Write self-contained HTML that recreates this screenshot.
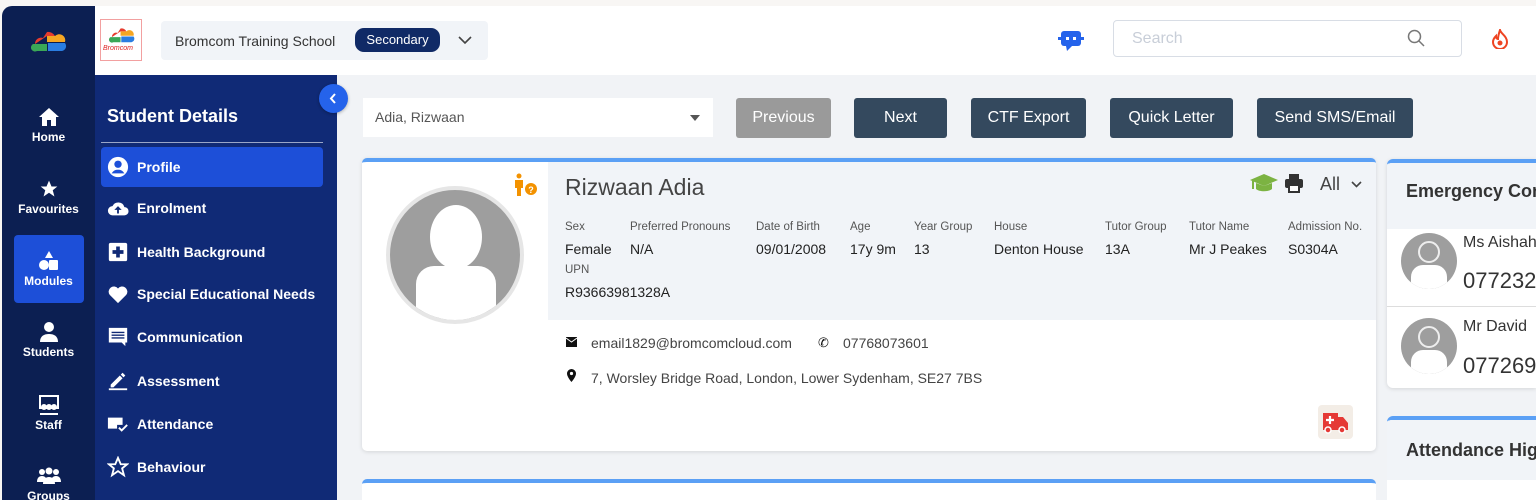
<!DOCTYPE html>
<html><head><meta charset="utf-8"><style>
*{margin:0;padding:0;box-sizing:border-box}
html,body{width:1536px;height:500px;overflow:hidden}
body{background:#f8f6f4;font-family:"Liberation Sans",sans-serif;position:relative}
.abs{position:absolute}
.rail{left:2px;top:6px;width:93px;height:494px;background:#0c1f52;border-top-left-radius:10px}
.rail .it{position:absolute;left:0;width:93px;text-align:center;color:#fff;font-size:12px;font-weight:bold}
.hdr{left:95px;top:6px;width:1441px;height:69px;background:#fff}
.side{left:95px;top:75px;width:242px;height:425px;background:#102a76}
.main{left:337px;top:75px;width:1199px;height:425px;background:#f1f3f6;overflow:hidden}
.mi{position:absolute;left:6px;width:222px;height:40px;color:#fff;font-size:14px;font-weight:bold;display:flex;align-items:center;padding-left:6px}
.mi svg{width:22px;height:22px;margin-right:8px;fill:#fff}
.btn{position:absolute;top:98px;height:40px;background:#34495e;color:#fff;font-size:16px;border-radius:3px;display:flex;align-items:center;justify-content:center}
.lab{position:absolute;top:221px;font-size:11.5px;color:#555}
.val{position:absolute;top:241px;font-size:14px;color:#222}
</style></head><body>
<div class="abs rail">
 <svg class="abs" style="left:29px;top:24px" width="36" height="22" viewBox="0 0 36 22"><path d="M4 14a6 6 0 0 1 8-6l4-6a8 8 0 0 1 8 4h-8z" fill="#e63c2e"/><path d="M16 6h8a6 6 0 0 1 10 6H16z" fill="#f5a623"/><path d="M2 14h14v7H6a4 4 0 0 1-4-7z" fill="#3aa757"/><path d="M17 13h17a5 5 0 0 1-3 8H17z" fill="#2a7de1"/></svg>
 <div class="it" style="top:101px"><svg width="22" height="20" viewBox="0 0 22 20" fill="#fff"><path d="M11 1L1 10h3v9h5v-6h4v6h5v-9h3z"/></svg><br>Home</div>
 <div class="it" style="top:173px"><svg width="22" height="20" viewBox="0 0 24 24" fill="#fff"><path d="M12 2l3 7h7l-5.5 4.5 2 7.5-6.5-4.5-6.5 4.5 2-7.5L2 9h7z"/></svg><br>Favourites</div>
 <div class="abs" style="left:12px;top:229px;width:70px;height:68px;background:#1d4fd8;border-radius:4px"></div>
 <div class="it" style="top:245px"><svg width="22" height="20" viewBox="0 0 22 20" fill="#fff"><path d="M11 0l4 7H7z"/><circle cx="6" cy="14" r="5"/><rect x="11" y="9" width="9" height="10" rx="1"/></svg><br>Modules</div>
 <div class="it" style="top:316px"><svg width="22" height="20" viewBox="0 0 22 20" fill="#fff"><circle cx="11" cy="5" r="5"/><path d="M2 20c0-6 4-8 9-8s9 2 9 8z"/></svg><br>Students</div>
 <div class="it" style="top:389px"><svg width="22" height="20" viewBox="0 0 22 20" fill="none" stroke="#fff" stroke-width="2"><rect x="2" y="1" width="18" height="12"/><circle cx="6" cy="12" r="2" fill="#fff"/><circle cx="11" cy="12" r="2" fill="#fff"/><circle cx="16" cy="12" r="2" fill="#fff"/><path d="M2 19h18"/></svg><br>Staff</div>
 <div class="it" style="top:460px"><svg width="24" height="20" viewBox="0 0 24 20" fill="#fff"><circle cx="5" cy="6" r="3"/><circle cx="12" cy="5" r="3.5"/><circle cx="19" cy="6" r="3"/><path d="M0 16c0-4 2-6 5-6s5 2 5 6zM14 16c0-4 2-6 5-6s5 2 5 6zM6 18c0-5 3-7 6-7s6 2 6 7z"/></svg><br>Groups</div>
</div>
<div class="abs hdr">
 <div class="abs" style="left:5px;top:13px;width:42px;height:42px;border:1px solid #f2a0a0;background:#fff"><svg class="abs" style="left:8px;top:7px" width="26" height="16" viewBox="0 0 36 22"><path d="M4 14a6 6 0 0 1 8-6l4-6a8 8 0 0 1 8 4h-8z" fill="#e63c2e"/><path d="M16 6h8a6 6 0 0 1 10 6H16z" fill="#f5a623"/><path d="M2 14h14v7H6a4 4 0 0 1-4-7z" fill="#3aa757"/><path d="M17 13h17a5 5 0 0 1-3 8H17z" fill="#2a7de1"/></svg><div class="abs" style="top:25px;left:2px;font-size:7px;color:#d22;font-style:italic">Bromcom</div></div>
 <div class="abs" style="left:66px;top:15px;width:327px;height:39px;background:#f1f4f8;border-radius:4px"></div>
 <div class="abs" style="left:80px;top:27px;font-size:14px;color:#333">Bromcom Training School</div>
 <div class="abs" style="left:260px;top:22px;width:85px;height:24px;background:#102a66;border-radius:9px;color:#fff;font-size:13px;text-align:center;line-height:24px">Secondary</div>
 <svg class="abs" style="left:363px;top:30px" width="14" height="9" viewBox="0 0 14 9"><path d="M1 1l6 6 6-6" stroke="#444" stroke-width="1.6" fill="none"/></svg>
 <svg class="abs" style="left:962px;top:22px" width="28" height="26" viewBox="0 0 28 26"><rect x="4" y="3" width="20" height="15" rx="3" fill="#2563eb"/><path d="M9 18h6l-5 5z" fill="#2563eb"/><rect x="1" y="9" width="3" height="3" fill="#2563eb"/><rect x="24" y="9" width="3" height="3" fill="#2563eb"/><rect x="9" y="9" width="3" height="3" fill="#fff"/><rect x="16" y="9" width="3" height="3" fill="#fff"/></svg>
 <div class="abs" style="left:1018px;top:14px;width:349px;height:37px;border:1px solid #d8dde5;border-radius:4px"></div>
 <div class="abs" style="left:1037px;top:24px;font-size:16px;color:#c8ced8">Search</div>
 <svg class="abs" style="left:1312px;top:23px" width="18" height="18" viewBox="0 0 18 18"><circle cx="7.5" cy="7.5" r="6" stroke="#777" stroke-width="1.5" fill="none"/><path d="M12 12l5 5" stroke="#777" stroke-width="1.5"/></svg>
 <svg class="abs" style="left:1397px;top:23px" width="16" height="20" viewBox="0 0 16 20"><path d="M8 1c1 4 7 6 7 12a7 7 0 0 1-14 0c0-3 2-5 3-6 0 2 1 3 2 3 0-3 1-6 2-9z" fill="none" stroke="#e42" stroke-width="2"/><circle cx="8" cy="14" r="2.5" fill="#e42"/></svg>
</div>
<div class="abs side">
 <div class="abs" style="left:12px;top:31px;color:#fff;font-size:18px;font-weight:bold">Student Details</div>
 <div class="abs" style="left:6px;top:67px;width:222px;height:1px;background:#9aa6c8"></div>
 <div class="mi" style="top:72px;background:#1d4fd8;border-radius:4px;height:40px"><svg viewBox="0 0 24 24"><circle cx="12" cy="12" r="11"/><circle cx="12" cy="9" r="4" fill="#1d4fd8"/><path d="M5 19c2-3 4-4 7-4s5 1 7 4" fill="#1d4fd8"/></svg>Profile</div>
 <div class="mi" style="top:113px"><svg viewBox="0 0 24 24"><path d="M6 20a5 5 0 0 1 0-10 7 7 0 0 1 13 1 4.5 4.5 0 0 1 0 9z"/><path d="M12 10l-4 4h3v4h2v-4h3z" fill="#102a76"/></svg>Enrolment</div>
 <div class="mi" style="top:157px"><svg viewBox="0 0 24 24"><rect x="2" y="2" width="20" height="20" rx="2"/><path d="M10 6h4v4h4v4h-4v4h-4v-4H6v-4h4z" fill="#102a76"/></svg>Health Background</div>
 <div class="mi" style="top:199px"><svg viewBox="0 0 24 24"><path d="M12 22L3 13a5.5 5.5 0 0 1 9-7 5.5 5.5 0 0 1 9 7z"/></svg>Special Educational Needs</div>
 <div class="mi" style="top:242px"><svg viewBox="0 0 24 24"><path d="M2 2h20v16h-2v4l-4-4H2z"/><path d="M5 7h14M5 10h14M5 13h14" stroke="#102a76" stroke-width="1.5"/></svg>Communication</div>
 <div class="mi" style="top:286px"><svg viewBox="0 0 24 24"><path d="M4 16l10-10 3 3-10 10H4zM15 5l2-2 3 3-2 2z"/><rect x="2" y="20" width="20" height="2"/></svg>Assessment</div>
 <div class="mi" style="top:329px"><svg viewBox="0 0 24 24"><path d="M2 6h14v2H2zM2 10h14v2H2zM2 14h8v2H2zM13 16l3 3 6-6" stroke="#fff" stroke-width="2" fill="none"/></svg>Attendance</div>
 <div class="mi" style="top:372px"><svg viewBox="0 0 24 24"><path d="M12 2l3 7h7l-5.5 4.5 2 7.5-6.5-4.5-6.5 4.5 2-7.5L2 9h7z" fill="none" stroke="#fff" stroke-width="2"/></svg>Behaviour</div>
</div>
<div class="abs main">
 <div class="abs" style="left:25px;top:404px;width:1014px;height:40px;background:#fff;border-top:4px solid #5ba0f5;border-radius:5px"></div>
 <div class="abs" style="left:1050px;top:341px;width:160px;height:100px;background:#fff;border-top:4px solid #5ba0f5;border-radius:6px;overflow:hidden">
  <div class="abs" style="left:0;top:0;width:160px;height:60px;background:#f1f4f8"></div>
  <div class="abs" style="left:19px;top:20px;font-size:18px;color:#333;font-weight:bold;white-space:nowrap">Attendance Highlights</div>
 </div>
</div>
<div class="abs" style="left:319px;top:84px;width:29px;height:29px;border-radius:50%;background:#2563eb;box-shadow:0 1px 3px rgba(0,0,0,.3)"><svg class="abs" style="left:10px;top:9px" width="8" height="11" viewBox="0 0 8 11"><path d="M6 1L2 5.5 6 10" stroke="#fff" stroke-width="2" fill="none"/></svg></div>
<div class="abs" style="left:363px;top:98px;width:350px;height:39px;background:#fff"></div>
<div class="abs" style="left:375px;top:109px;font-size:14px;color:#555">Adia, Rizwaan</div>
<svg class="abs" style="left:690px;top:115px" width="10" height="6"><path d="M0 0h10L5 6z" fill="#555"/></svg>
<div class="btn" style="left:736px;width:95px;background:#9a9a9a">Previous</div>
<div class="btn" style="left:854px;width:93px">Next</div>
<div class="btn" style="left:971px;width:115px">CTF Export</div>
<div class="btn" style="left:1110px;width:123px">Quick Letter</div>
<div class="btn" style="left:1257px;width:156px">Send SMS/Email</div>
<div class="abs" style="left:362px;top:158px;width:1014px;height:293px;background:#fff;border-top:4px solid #5ba0f5;border-radius:5px;box-shadow:0 1px 4px rgba(0,0,0,.12);overflow:hidden"><div class="abs" style="left:186px;top:0;width:828px;height:158px;background:#f1f4f8"></div></div>
<div class="abs" style="left:386px;top:186px;width:138px;height:138px;border-radius:50%;background:#9e9e9e;border:4px solid #e6e6e6;overflow:hidden"><div class="abs" style="left:40px;top:15px;width:52px;height:64px;border-radius:50%;background:#fff"></div><div class="abs" style="left:26px;top:76px;width:80px;height:60px;border-radius:18px 18px 0 0;background:#fff"></div></div>
<svg class="abs" style="left:513px;top:173px" width="26" height="24" viewBox="0 0 26 24"><circle cx="6" cy="3" r="2.5" fill="#f39200"/><path d="M2 7h8v8H8v8H4v-8H2z" fill="#f39200"/><circle cx="18" cy="16" r="6" fill="#f39200"/><text x="18" y="20" font-size="9" fill="#fff" text-anchor="middle" font-family="Liberation Sans" font-weight="bold">?</text></svg>
<div class="abs" style="left:565px;top:174px;font-size:23px;color:#444">Rizwaan Adia</div>
<svg class="abs" style="left:1249px;top:172px" width="30" height="22" viewBox="0 0 30 22"><path d="M15 2L1 8l14 6 14-6z" fill="#7cb342"/><path d="M7 11v6c3 3 13 3 16 0v-6l-8 3z" fill="#7cb342"/><path d="M4 9v8" stroke="#7cb342" stroke-width="2"/></svg>
<svg class="abs" style="left:1284px;top:173px" width="20" height="20" viewBox="0 0 20 20"><rect x="5" y="1" width="10" height="5" fill="#333"/><rect x="1" y="6" width="18" height="9" rx="2" fill="#333"/><rect x="5" y="12" width="10" height="7" fill="#fff" stroke="#333" stroke-width="2"/></svg>
<div class="abs" style="left:1320px;top:174px;font-size:18px;color:#444">All</div>
<svg class="abs" style="left:1351px;top:181px" width="11" height="7"><path d="M1 1l4.5 4.5L10 1" stroke="#444" stroke-width="1.6" fill="none"/></svg>
<div class="lab" style="left:565px">Sex</div><div class="val" style="left:565px">Female</div>
<div class="lab" style="left:630px">Preferred Pronouns</div><div class="val" style="left:630px">N/A</div>
<div class="lab" style="left:756px">Date of Birth</div><div class="val" style="left:756px">09/01/2008</div>
<div class="lab" style="left:850px">Age</div><div class="val" style="left:850px">17y 9m</div>
<div class="lab" style="left:914px">Year Group</div><div class="val" style="left:914px">13</div>
<div class="lab" style="left:994px">House</div><div class="val" style="left:994px">Denton House</div>
<div class="lab" style="left:1105px">Tutor Group</div><div class="val" style="left:1105px">13A</div>
<div class="lab" style="left:1189px">Tutor Name</div><div class="val" style="left:1189px">Mr J Peakes</div>
<div class="lab" style="left:1288px">Admission No.</div><div class="val" style="left:1288px">S0304A</div>
<div class="lab" style="left:565px;top:264px">UPN</div><div class="val" style="left:565px;top:284px">R93663981328A</div>
<svg class="abs" style="left:566px;top:337px" width="11" height="10"><rect width="11" height="10" fill="#111"/><path d="M0 1l5.5 4L11 1" stroke="#fff" fill="none"/></svg>
<div class="abs" style="left:591px;top:335px;font-size:14px;color:#444">email1829@bromcomcloud.com</div>
<div class="abs" style="left:818px;top:335px;font-size:13px;color:#111">✆</div>
<div class="abs" style="left:843px;top:335px;font-size:14px;color:#444">07768073601</div>
<svg class="abs" style="left:567px;top:369px" width="9" height="13" viewBox="0 0 9 13"><path d="M4.5 0A4.5 4.5 0 0 0 0 4.5C0 8 4.5 13 4.5 13S9 8 9 4.5A4.5 4.5 0 0 0 4.5 0z" fill="#111"/><circle cx="4.5" cy="4.5" r="1.6" fill="#fff"/></svg>
<div class="abs" style="left:591px;top:370px;font-size:14px;color:#444">7, Worsley Bridge Road, London, Lower Sydenham, SE27 7BS</div>
<div class="abs" style="left:1318px;top:405px;width:35px;height:34px;background:#f3ede6;border-radius:4px"><svg class="abs" style="left:4px;top:5px" width="27" height="24" viewBox="0 0 27 24"><path d="M1 3h15v4h5l5 6v7H1z" fill="#e53935"/><circle cx="6" cy="20" r="3" fill="#e53935" stroke="#fff" stroke-width="1.5"/><circle cx="20" cy="20" r="3" fill="#e53935" stroke="#fff" stroke-width="1.5"/><path d="M8 6v8M4 10h8" stroke="#fff" stroke-width="2.2"/></svg></div>
<div class="abs" style="left:1387px;top:159px;width:149px;height:229px;background:#fff;border-top:4px solid #5ba0f5;border-top-left-radius:6px;border-bottom-left-radius:6px;box-shadow:0 1px 4px rgba(0,0,0,.12);overflow:hidden">
 <div class="abs" style="left:0;top:0;width:160px;height:66px;background:#f1f4f8"></div>
 <div class="abs" style="left:19px;top:18px;font-size:18px;color:#333;font-weight:bold;white-space:nowrap">Emergency Contacts</div>
 <div class="abs" style="left:0;top:143px;width:160px;height:1px;background:#ddd"></div>
 <div class="abs" style="left:76px;top:71px;font-size:16px;color:#333;white-space:nowrap">Ms Aishah</div>
 <div class="abs" style="left:76px;top:105px;font-size:22px;color:#333">077232</div>
 <div class="abs" style="left:76px;top:155px;font-size:16px;color:#333;white-space:nowrap">Mr David</div>
 <div class="abs" style="left:76px;top:190px;font-size:22px;color:#333">077269</div>
</div>
<div class="abs" style="left:1401px;top:233px;width:56px;height:56px;border-radius:50%;background:#9e9e9e;overflow:hidden"><div class="abs" style="left:17px;top:8px;width:22px;height:22px;border-radius:50%;border:2px solid #eee;background:#9e9e9e"></div><div class="abs" style="left:10px;top:32px;width:36px;height:24px;border-radius:12px 12px 6px 6px;background:#fff"></div></div>
<div class="abs" style="left:1401px;top:318px;width:56px;height:56px;border-radius:50%;background:#9e9e9e;overflow:hidden"><div class="abs" style="left:17px;top:8px;width:22px;height:22px;border-radius:50%;border:2px solid #eee;background:#9e9e9e"></div><div class="abs" style="left:10px;top:32px;width:36px;height:24px;border-radius:12px 12px 6px 6px;background:#fff"></div></div>
</body></html>
